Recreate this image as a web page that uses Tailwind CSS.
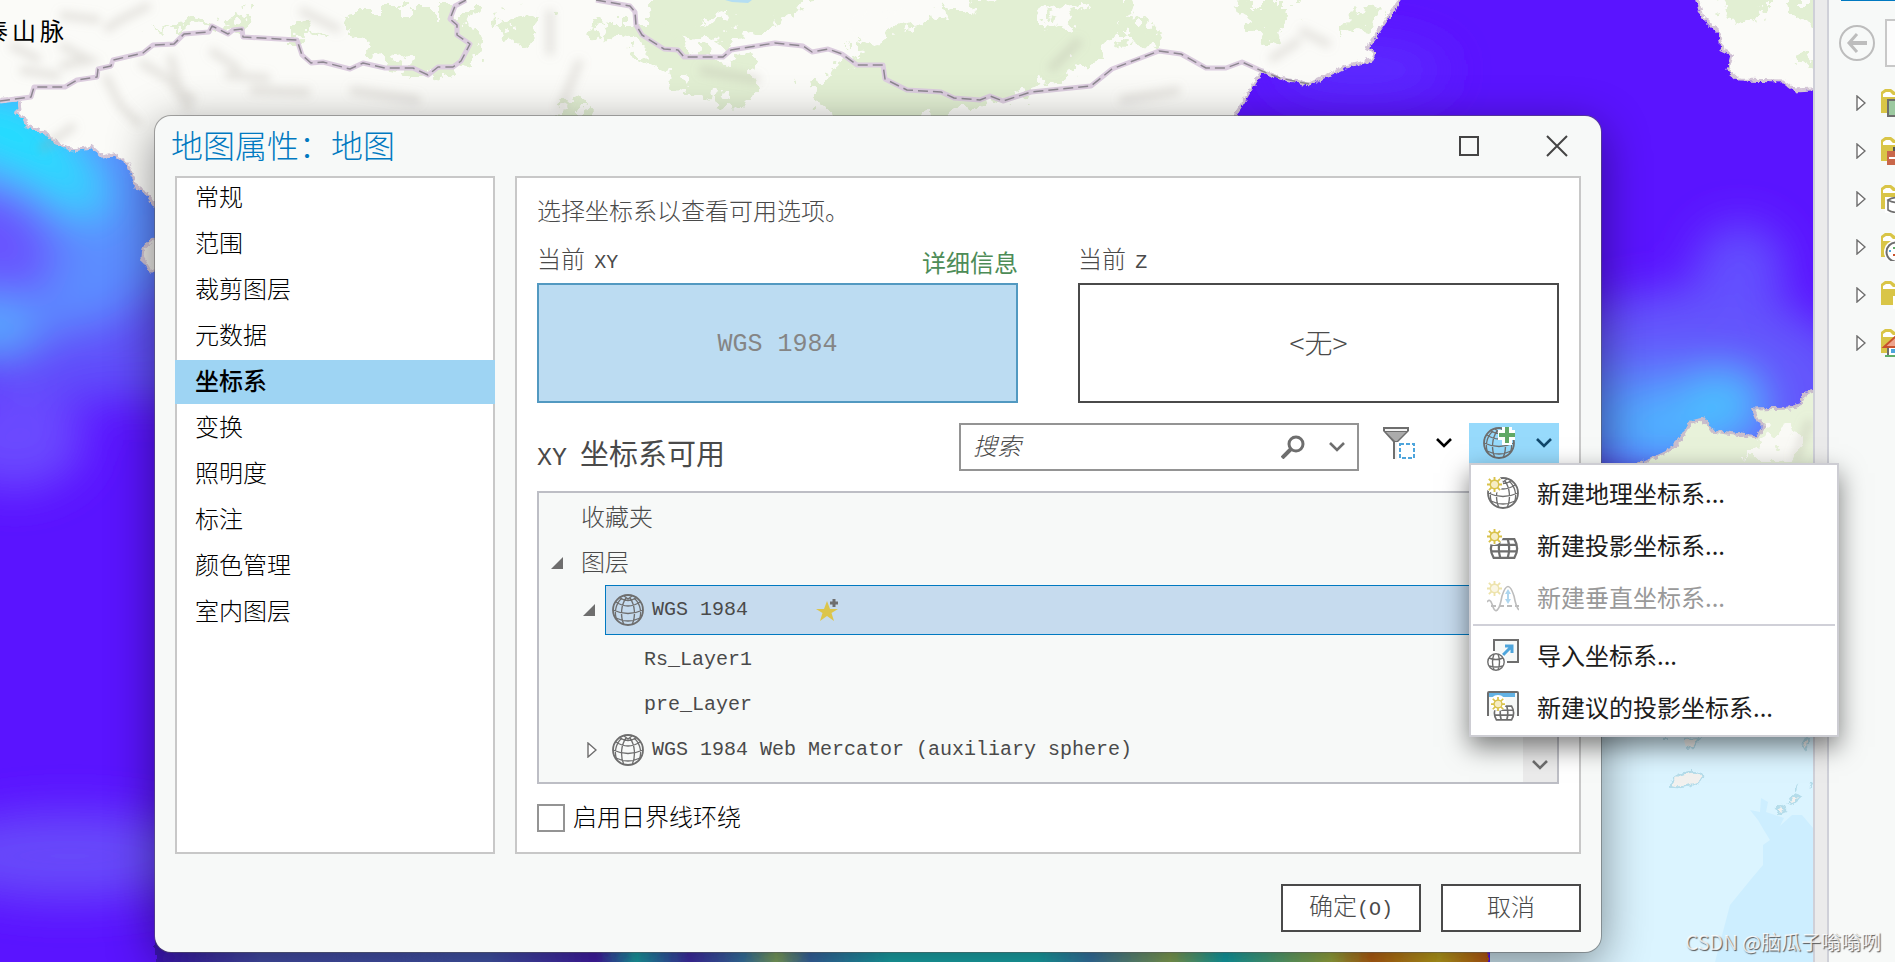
<!DOCTYPE html>
<html lang="zh-CN">
<head>
    <meta charset="UTF-8">
    <meta name="viewport" content="width=device-width, initial-scale=1.0">
    <title>地图属性：地图</title>
    <script src="https://cdn.jsdelivr.net/npm/@tailwindcss/browser@4"></script>
</head>
<body class="relative flex min-h-screen overflow-hidden bg-[#f7f9f8] font-['Noto_Sans_CJK_SC',sans-serif] text-2xl font-light text-[#4a4a4a]">

    <!-- shared icons -->
    <svg class="hidden">
        <symbol id="globe" viewBox="0 0 32 32">
            <g fill="none" stroke="#6e6e6e">
                <circle cx="16" cy="16" r="15" stroke-width="1.8"/>
                <path stroke-width="1.3" d="M14 4C9 11 8 22 12 31M18 4C23 11 24 22 20 31M10 4C3 10 2 20 5 26M22 4C29 10 30 20 27 26M4 8Q16 16 28 8M1 16Q16 23 31 16M4 24Q16 30 28 24M8 4Q16 9 24 4M12 2L16 5L20 2"/>
            </g>
        </symbol>
        <symbol id="sun" viewBox="0 0 16 16">
            <path stroke="#d9c24a" stroke-width="2" d="M8 0V16M0 8H16M2 2L14 14M14 2L2 14"/>
            <circle cx="8" cy="8" r="4.5" fill="#f6edc4" stroke="#d9c24a" stroke-width="1.5"/>
        </symbol>
        <symbol id="barrel" viewBox="0 0 32 24">
            <path fill="#fff" stroke="#6e6e6e" stroke-width="2.4" d="M5 2H27Q33 12 27 22H5Q-1 12 5 2Z"/>
            <path fill="none" stroke="#6e6e6e" stroke-width="2.4" d="M2 8H30M2 15H30M12 2Q9 12 12 22M20 2Q23 12 20 22"/>
        </symbol>
        <symbol id="chevron" viewBox="0 0 16 10">
            <path fill="none" stroke="currentColor" stroke-width="2.6" d="M1 1L8 8L15 1"/>
        </symbol>
        <symbol id="tri-open" viewBox="0 0 10 16">
            <path fill="#fff" stroke="#6e6e6e" stroke-width="1.4" d="M1 1L9 8L1 15Z"/>
        </symbol>
        <symbol id="tri-full" viewBox="0 0 12 12">
            <path fill="#6e6e6e" d="M12 0V12H0Z"/>
        </symbol>
        <symbol id="folder" viewBox="0 0 28 26">
            <path fill="#d9c547" d="M0 24V3L4 0H10L14 3H28V24Z"/>
            <path fill="#fff" d="M2 5L5 3H9L12 6H28V8H2Z"/>
        </symbol>
    </svg>

    <!-- map -->
    <main class="relative min-h-screen flex-1 overflow-hidden bg-[#5a14ff]">
        <svg class="absolute inset-0 h-full w-full" viewBox="0 0 1813 962" preserveAspectRatio="xMinYMin slice">
            <defs>
                <filter id="b8" x="-50%" y="-50%" width="200%" height="200%"><feGaussianBlur stdDeviation="5"/></filter>
                <filter id="b25" x="-50%" y="-50%" width="200%" height="200%"><feGaussianBlur stdDeviation="22"/></filter>
                <filter id="rough" x="-5%" y="-5%" width="110%" height="110%">
                    <feTurbulence type="fractalNoise" baseFrequency="0.06" numOctaves="4" seed="4"/>
                    <feDisplacementMap in="SourceGraphic" xChannelSelector="R" yChannelSelector="G" scale="44"/>
                </filter>
                <filter id="coast" x="-5%" y="-5%" width="110%" height="110%">
                    <feTurbulence type="fractalNoise" baseFrequency="0.2" numOctaves="3" seed="2"/>
                    <feDisplacementMap in="SourceGraphic" xChannelSelector="R" yChannelSelector="G" scale="6"/>
                </filter>
                <linearGradient id="strip">
                    <stop offset="0" stop-color="#3d14b8"/><stop offset=".08" stop-color="#4b55b8"/>
                    <stop offset=".25" stop-color="#4a5cba"/><stop offset=".33" stop-color="#4a20b8"/>
                    <stop offset=".36" stop-color="#1eafb6"/><stop offset=".4" stop-color="#4630b8"/>
                    <stop offset=".44" stop-color="#3c80b4"/><stop offset=".465" stop-color="#8bb46a"/>
                    <stop offset=".49" stop-color="#3c70b4"/><stop offset=".55" stop-color="#1bb5b8"/>
                    <stop offset=".66" stop-color="#1bb5b8"/><stop offset=".7" stop-color="#3b80b4"/>
                    <stop offset=".76" stop-color="#90b25c"/><stop offset=".8" stop-color="#14b0b8"/>
                    <stop offset=".88" stop-color="#a8b844"/><stop offset=".91" stop-color="#c86a14"/>
                    <stop offset=".96" stop-color="#ccb020"/><stop offset="1" stop-color="#c85a10"/>
                </linearGradient>
            </defs>

            <!-- raster, lighter areas -->
            <g filter="url(#b25)">
                <path fill="#6050fa" d="M-60 200H200V400H60L-60 380Z"/>
                <path fill="#5c8dff" d="M-60 60H180V260L110 320L-60 350Z"/>
                <path fill="#6854ff" d="M-60 185L20 190L60 250L40 300L-60 280Z"/>
                <path fill="#22deff" d="M-50 80L40 100L80 150L110 200L90 220L30 185L-50 150Z"/>
                <ellipse cx="0" cy="330" rx="34" ry="18" fill="#55b8ff"/>
                <ellipse cx="15" cy="440" rx="70" ry="50" fill="#6a48ff"/>
                <ellipse cx="70" cy="856" rx="150" ry="44" fill="#6748fa"/>
                <ellipse cx="1360" cy="70" rx="90" ry="30" fill="#5c2cff"/>
                <ellipse cx="1690" cy="390" rx="170" ry="100" fill="#6356fc"/>
                <ellipse cx="1650" cy="420" rx="110" ry="56" fill="#5a84fc"/>
                <ellipse cx="1740" cy="270" rx="46" ry="46" fill="#6450ff"/>
                <ellipse cx="1660" cy="425" rx="50" ry="30" fill="#4fb2ff"/>
                <ellipse cx="1722" cy="402" rx="38" ry="30" fill="#48c4ff"/>
            </g>

            <!-- land north -->
            <g filter="url(#coast)">
                <path fill="#fbfbf8" stroke="#d3c5d6" stroke-width="3" d="M-9 -9V101L19 99L20 110L17 113L26 120L27 126L47 134L56 143L72 150L92 147L103 157L113 154L127 163L134 180L136 187L147 194L153 203L180 240H1000L1226 130L1262 71L1280 78L1309 84L1345 67L1372 60L1375 53L1367 48L1381 28L1406 -9Z"/>
                <path fill="#fbfbf8" stroke="#d3c5d6" stroke-width="3" d="M1695 -9L1703 17L1720 34L1722 50L1732 55L1728 70L1739 80L1783 81L1795 90L1830 88V-9Z"/>
                <path fill="#ecebe8" stroke="#d3c5d6" stroke-width="3" d="M170 225L143 248L142 257L150 271H170Z"/>
                <path fill="#e8f2da" stroke="#c9bdcc" stroke-width="3" d="M1830 388L1805 393L1800 405L1790 408L1753 409L1758 420L1764 426L1757 437L1712 431L1703 419L1691 422L1680 440L1670 450L1645 462L1600 480V760H1830Z"/>
            </g>
            <g fill="#e2efd3" filter="url(#rough)">
                <path d="M352 10H470L480 60L440 75L400 68L350 35L345 20Z"/>
                <path d="M150 28L200 22L250 14L255 22L200 30Z"/>
                <path d="M290 25L320 35L310 42L290 35Z"/>
                <path d="M500 20L545 15L540 35L510 40Z"/>
                <path d="M590 30L640 50L680 90L740 110L760 90L750 60L700 55L660 20L600 20Z"/>
                <path d="M660 -10H830L780 20L730 40L680 42L650 20Z"/>
                <path d="M800 90L850 60L850 40L960 10L1000 -10H1140L1110 50L1090 60L1060 80L1000 100L960 110L900 125H850L825 110Z"/>
                <path d="M1240 0H1300L1290 25L1260 40L1245 20Z"/>
                <path d="M1345 15L1385 10L1370 35L1350 30Z"/>
                <path d="M1120 10L1160 30L1150 45L1120 30Z"/>
                <path d="M1710 -10H1770V10L1740 30L1720 20Z"/>
                <path d="M1790 0H1820V30L1795 20Z"/>
                <path d="M1800 55L1820 50V70L1805 68Z"/>
                <path d="M560 100L590 95L585 118H555Z"/>
            </g>
            <path fill="#fafaf6" filter="url(#rough)" d="M1770 430L1790 425L1800 445L1775 460H1740L1760 440Z"/>
            <g fill="#fbfbf8" filter="url(#rough)">
                <path d="M860 20L930 2L960 8L900 30L850 50Z"/>
                <path d="M1040 20L1080 2L1070 20L1040 30Z"/>
                <path d="M700 20L730 10L725 22Z"/>
            </g>

            <!-- relief -->
            <g fill="none" stroke="#a9a29c" stroke-opacity=".28" stroke-width="8" filter="url(#b8)">
                <path d="M105 30L120 20L150 5M140 62L170 80L190 110M105 75L120 105L140 125M60 45L90 60L60 66M170 55L180 90L195 100M225 75L270 78M250 90L310 92M550 10V55M580 60L560 110M40 150L75 125M300 10L340 30M700 70L760 80M1270 60L1300 40M60 15L100 20M10 45L40 60M1080 40L1050 70M20 70L60 76M210 50L240 70M350 90L420 100M1120 100L1180 90M1300 30L1330 45"/>
                <path d="M1795 460L1810 420"/>
            </g>

            <!-- country border -->
            <g fill="none" stroke-linejoin="round">
                <g stroke="#dccddf" stroke-width="5">
                    <path d="M0 101L31 97L34 87L65 87L77 80L97 77L98 69L111 66L113 60L143 53L153 45L174 44L184 34L209 32L212 26L228 34L233 30L242 29L243 37L297 40L302 55L311 63L323 62L350 69L363 63L385 68L413 68L428 75L438 67L453 67L461 61L470 44L457 35L457 25L450 19L455 6L466 0"/>
                    <path d="M596 0L630 6L635 12L636 25L642 35L664 49L678 50L684 57L723 57L731 50L775 43L803 46L812 52L828 49L842 54L857 65L883 65L885 79L907 90L941 92L954 98L980 100L990 96L1003 101L1031 92L1091 86L1112 69L1159 51L1181 54L1206 68L1226 68L1242 62L1262 71"/>
                </g>
                <g stroke="#8d8790" stroke-width="1.5" stroke-dasharray="10 5">
                    <path d="M0 101L31 97L34 87L65 87L77 80L97 77L98 69L111 66L113 60L143 53L153 45L174 44L184 34L209 32L212 26L228 34L233 30L242 29L243 37L297 40L302 55L311 63L323 62L350 69L363 63L385 68L413 68L428 75L438 67L453 67L461 61L470 44L457 35L457 25L450 19L455 6L466 0"/>
                    <path d="M596 0L630 6L635 12L636 25L642 35L664 49L678 50L684 57L723 57L731 50L775 43L803 46L812 52L828 49L842 54L857 65L883 65L885 79L907 90L941 92L954 98L980 100L990 96L1003 101L1031 92L1091 86L1112 69L1159 51L1181 54L1206 68L1226 68L1242 62L1262 71L1280 78L1309 84"/>
                </g>
            </g>
            <path fill="#b5def2" d="M725 0H752L748 3L732 2Z"/>

            <!-- sea south east -->
            <path fill="#dbf4ff" d="M1490 700H1813V962H1490Z"/>
            <path fill="#cdeeff" d="M1715 962L1730 905L1752 878L1763 865V845L1770 840L1765 832L1758 820L1750 810L1760 812L1761 798L1768 802L1766 812L1784 818L1780 826L1792 815H1802L1813 828V962Z"/>
            <g fill="#f2f1ef" stroke="#b4dcea" stroke-width="2" filter="url(#coast)">
                <path d="M1671 786Q1670 775 1690 772Q1704 771 1702 778Q1700 784 1690 785Q1680 789 1671 786Z"/>
                <path d="M1776 808L1782 805L1786 811L1779 814ZM1788 803L1794 795L1800 797L1792 804ZM1796 792L1798 784M1809 788L1813 782M1664 739H1668M1684 739L1700 738L1694 747L1686 748M1802 745L1806 738L1809 740L1805 749Z"/>
            </g>

            <!-- raster rim south -->
            <path fill="url(#strip)" filter="url(#coast)" d="M155 940H1492L1485 972H155Z"/>
            <path fill="none" stroke="#4b12b8" stroke-width="8" stroke-dasharray="3 14 6 9 2 21" filter="url(#rough)" d="M160 957H700M1000 957H1060"/>
            <path fill="none" stroke="#e0c020" stroke-width="8" stroke-dasharray="5 9 9 14" filter="url(#rough)" d="M1310 957H1480"/>
        </svg>
        <div class="absolute top-2.5 -left-4 flex gap-1 text-2xl leading-10 font-normal text-black">
            <span>泰</span><span>山</span><span>脉</span>
        </div>
    </main>

    <!-- splitter -->
    <div class="w-4 border-x-2 border-[#cfd0d8] bg-[#ebebeb]"></div>

    <!-- catalog pane -->
    <aside class="w-[66px] overflow-hidden pl-3">
        <div class="h-px bg-[#0079c1]"></div>
        <div class="flex w-24 pt-[18px]">
            <button class="-ml-0.5 mt-1.5 h-9" aria-label="返回">
                <svg class="block h-9 w-9" viewBox="0 0 36 36" fill="none" stroke="#bdbdbd">
                    <circle cx="18" cy="18" r="17" stroke-width="2"/>
                    <path stroke-width="4" d="M28 18H11"/><path stroke-width="3" d="M18 9L10 18L18 27"/>
                </svg>
            </button>
            <div class="ml-[10px] h-12 w-10 border-2 border-[#c8c8c8] bg-[#fcfcfc]"></div>
        </div>
        <ul class="w-24 pt-3">
            <li class="flex h-12 items-center gap-[15px] pl-[15px]">
                <svg class="h-4 w-[10px]"><use href="#tri-open"/></svg>
                <svg class="h-7 w-7" viewBox="0 0 28 28"><use href="#folder" width="28" height="26"/><path fill="#9cc9a0" stroke="#6e6e6e" stroke-width="2" d="M7 11H30V27H7Z"/></svg>
            </li>
            <li class="flex h-12 items-center gap-[15px] pl-[15px]">
                <svg class="h-4 w-[10px]"><use href="#tri-open"/></svg>
                <svg class="h-7 w-7" viewBox="0 0 28 28"><use href="#folder" width="28" height="26"/><path fill="#c9674a" d="M6 14H28V28H6Z"/><path stroke="#fff" stroke-width="2" d="M8 21H28"/><path fill="#555" d="M12 10H28V14H12Z"/></svg>
            </li>
            <li class="flex h-12 items-center gap-[15px] pl-[15px]">
                <svg class="h-4 w-[10px]"><use href="#tri-open"/></svg>
                <svg class="h-7 w-7" viewBox="0 0 28 28"><use href="#folder" width="28" height="26"/><path fill="#fff" d="M4 12H28V28H4Z"/><path fill="#fff" stroke="#6e6e6e" stroke-width="1.6" d="M7 15V25Q15 30 27 25V15Q15 10 7 15Q15 20 27 15"/></svg>
            </li>
            <li class="flex h-12 items-center gap-[15px] pl-[15px]">
                <svg class="h-4 w-[10px]"><use href="#tri-open"/></svg>
                <svg class="h-7 w-7" viewBox="0 0 28 28"><use href="#folder" width="28" height="26"/><circle cx="15" cy="19" r="12" fill="#fff"/><circle cx="15" cy="19" r="9.5" fill="#fff" stroke="#6e6e6e" stroke-width="2"/><path fill="#4ea5dc" d="M8 17H10V19H8Z"/><path fill="#5fae69" d="M12 14H14V16H12Z"/><path fill="#c9522d" d="M12 21H14V23H12Z"/></svg>
            </li>
            <li class="flex h-12 items-center gap-[15px] pl-[15px]">
                <svg class="h-4 w-[10px]"><use href="#tri-open"/></svg>
                <svg class="h-7 w-7" viewBox="0 0 28 28"><use href="#folder" width="28" height="26"/><path fill="#fff" d="M12 15H28V28H12Z"/></svg>
            </li>
            <li class="flex h-12 items-center gap-[15px] pl-[15px]">
                <svg class="h-4 w-[10px]"><use href="#tri-open"/></svg>
                <svg class="h-7 w-7" viewBox="0 0 28 28"><use href="#folder" width="28" height="26"/><path fill="#fff" stroke="#6e6e6e" stroke-width="2" d="M7 17H24V28H7Z"/><path fill="#eda58e" stroke="#c9522d" stroke-width="2" d="M3 18L14 8L26 18Z"/><path fill="#4ea5dc" d="M10 20H18V24H10Z"/><path fill="#5fae69" d="M4 26H28V28H4Z"/></svg>
            </li>
        </ul>
    </aside>

    <!-- map properties window -->
    <section class="absolute top-[116px] right-[294px] left-[155px] rounded-2xl bg-[#f7f9f8] px-5 pb-5 shadow-[0_0_0_1px_rgba(90,90,90,0.5),0_12px_48px_rgba(0,0,0,0.45)]">
        <header class="flex h-15 items-center justify-between pr-3">
            <h1 class="-ml-1 pb-1 text-[32px] leading-10 text-[#0079c1]">地图属性：地图</h1>
            <div class="flex gap-16">
                <button class="flex h-6 w-6 items-center justify-center" aria-label="最大化"><span class="h-5 w-5 border-2 border-[#444]"></span></button>
                <button class="flex h-6 w-6 items-center justify-center" aria-label="关闭">
                    <svg class="h-6 w-6" viewBox="0 0 24 24"><path stroke="#444" stroke-width="2" d="M2 2L22 22M22 2L2 22"/></svg>
                </button>
            </div>
        </header>

        <div class="flex gap-5">
            <!-- pages -->
            <nav class="w-80 shrink-0 bg-white text-black inset-ring-2 inset-ring-[#c8c8c8]">
                <ul class="flex flex-col gap-0.5 leading-10">
                    <li><a href="#" class="block pb-1 pl-5">常规</a></li>
                    <li><a href="#" class="block pb-1 pl-5">范围</a></li>
                    <li><a href="#" class="block pb-1 pl-5">裁剪图层</a></li>
                    <li><a href="#" class="block pb-1 pl-5">元数据</a></li>
                    <li><a href="#" class="block bg-[#9ed4f3] pb-1 pl-5 font-medium">坐标系</a></li>
                    <li><a href="#" class="block pb-1 pl-5">变换</a></li>
                    <li><a href="#" class="block pb-1 pl-5">照明度</a></li>
                    <li><a href="#" class="block pb-1 pl-5">标注</a></li>
                    <li><a href="#" class="block pb-1 pl-5">颜色管理</a></li>
                    <li><a href="#" class="block pb-1 pl-5">室内图层</a></li>
                </ul>
            </nav>

            <!-- coordinate systems -->
            <div class="flex-1 border-2 border-[#c8c8c8] bg-white pt-4 pr-5 pb-5 pl-5">
                <p class="leading-8">选择坐标系以查看可用选项。</p>
                <div class="mt-4 grid grid-cols-2 gap-[60px]">
                    <div>
                        <div class="flex h-[41px] justify-between">
                            <span class="leading-8">当前 <span class="ml-1 font-['Liberation_Mono',monospace] text-xl">XY</span></span>
                            <a href="#" class="leading-10 font-normal text-[#4d8c57]">详细信息</a>
                        </div>
                        <button class="block h-30 w-full border-2 border-[#5299c1] bg-[#bcdcf2] pt-1 font-['Liberation_Mono',monospace] text-[25px] text-[#858585]">WGS 1984</button>
                    </div>
                    <div>
                        <div class="h-[41px] leading-8">当前 <span class="ml-1 font-['Liberation_Mono',monospace] text-xl">Z</span></div>
                        <button class="block h-30 w-full border-2 border-[#4a4a4a] bg-white text-[28px]">&lt;无&gt;</button>
                    </div>
                </div>

                <div class="mt-5 flex h-12">
                    <h2 class="self-end text-[29px] leading-6 font-normal"><span class="font-['Liberation_Mono',monospace] text-[25px]">XY</span>&nbsp; 坐标系可用</h2>
                    <div class="ml-auto flex w-100 items-center border-2 border-[#949494] pr-3 pl-3">
                        <input type="text" aria-label="搜索" placeholder="搜索" class="min-w-0 flex-1 pb-1 italic outline-none placeholder:text-[#4a4a4a]">
                        <svg class="h-6 w-6" viewBox="0 0 24 24" fill="none" stroke="#6e6e6e"><circle cx="15" cy="9" r="7" stroke-width="3"/><path stroke-width="4" d="M10 14L1 23"/></svg>
                        <svg class="ml-6 h-[10px] w-4 text-[#6e6e6e]"><use href="#chevron"/></svg>
                    </div>
                    <button class="ml-6 flex h-10 w-[69px] items-center justify-between" aria-label="过滤器">
                        <svg class="h-8 w-8" viewBox="0 0 32 32">
                            <path fill="#6e6e6e" d="M0 0H26V4L15 15V32H10V15L0 4Z"/>
                            <path fill="#f4f4f4" d="M2 2H24V4H2ZM12 15H14V32H12Z"/>
                            <path fill="#ababab" d="M3 5H23L14 14H12Z"/>
                            <path fill="#fff" d="M14 15H32V32H14Z"/>
                            <path fill="none" stroke="#4ea5dc" stroke-width="2" stroke-dasharray="4 2" d="M17 17H31V31H17Z"/>
                        </svg>
                        <svg class="h-[10px] w-4 text-black"><use href="#chevron"/></svg>
                    </button>

                    <div class="relative z-10 ml-[17px]">
                        <button class="flex h-10 w-[90px] items-center justify-between bg-[#97dafc] pr-[7px] pl-[14px]" aria-label="添加坐标系">
                            <svg class="h-8 w-8" viewBox="0 0 32 32">
                                <use href="#globe"/>
                                <path fill="#fff" d="M19 -1H29V3H33V13H29V18H19V13H15V3H19Z"/>
                                <path fill="#61a866" d="M22 0H26V6H32V10H26V16H22V10H16V6H22Z"/>
                            </svg>
                            <svg class="h-[10px] w-4 text-[#11476b]"><use href="#chevron"/></svg>
                        </button>
                        <ul class="absolute top-10 left-0 w-[370px] border-2 border-[#cdcdd3] bg-white py-0.5 leading-[52px] font-normal text-[#1c1c1c] shadow-[0_10px_24px_rgba(0,0,0,0.5)]">
                            <li><button class="flex w-full items-center gap-[18px] pl-4">
                                <svg class="h-8 w-8" viewBox="0 0 32 32"><use href="#globe"/><circle cx="7" cy="7" r="9" fill="#fff"/><use href="#sun" width="15" height="15"/></svg>
                                新建地理坐标系...</button></li>
                            <li><button class="flex w-full items-center gap-[18px] pl-4">
                                <svg class="h-8 w-8" viewBox="0 0 32 32"><use href="#barrel" x="2" y="8" width="30" height="23"/><circle cx="7" cy="7" r="9" fill="#fff"/><use href="#sun" width="15" height="15"/></svg>
                                新建投影坐标系...</button></li>
                            <li><button disabled class="flex w-full items-center gap-[18px] pl-4 text-[#999]">
                                <svg class="h-8 w-8 opacity-45" viewBox="0 0 32 32">
                                    <use href="#sun" width="15" height="15"/>
                                    <path fill="none" stroke="#6e6e6e" stroke-width="1.6" d="M0 21Q3 17 5 23Q8 33 11 28Q13 26 15 15Q21 -4 27 15Q29 26 32 29"/>
                                    <path stroke="#6e6e6e" stroke-width="2" stroke-dasharray="5 3" d="M4 25H32"/>
                                    <path fill="#4ea5dc" d="M21 8L24 13H22V18H24L21 23L18 18H20V13H18Z"/>
                                </svg>
                                新建垂直坐标系...</button></li>
                            <li class="mx-0.5 mt-px mb-[3px] h-0.5 bg-[#d0d0d8]"></li>
                            <li><button class="flex w-full items-center gap-[18px] pl-4">
                                <svg class="h-8 w-8" viewBox="0 0 32 32">
                                    <path fill="#f7f9f8" stroke="#6e6e6e" stroke-width="2" d="M7 12V1H31V23H20"/>
                                    <path fill="none" stroke="#4ea5dc" stroke-width="3" d="M16 16L25 7M18 7H25V14"/>
                                    <circle cx="9" cy="23" r="10" fill="#fff"/>
                                    <g fill="none" stroke="#6e6e6e" stroke-width="1.4"><circle cx="9" cy="23" r="8.2"/><path d="M7 15Q4 23 7 31M11 15Q14 23 11 31M2 19Q9 22 16 19M2 27Q9 29 16 27"/></g>
                                </svg>
                                导入坐标系...</button></li>
                            <li><button class="flex w-full items-center gap-[18px] pl-4">
                                <svg class="h-8 w-8" viewBox="0 0 32 32">
                                    <path fill="#f7f9f8" stroke="#6e6e6e" stroke-width="2" d="M1 25V2Q1 1 2 1H30Q31 1 31 2V25"/>
                                    <path fill="#62b2e4" d="M2 2H28V6H2Z"/>
                                    <use href="#barrel" x="6" y="12" width="22" height="20"/>
                                    <circle cx="11" cy="12" r="8" fill="#fff"/><use href="#sun" x="4" y="6" width="14" height="14"/>
                                </svg>
                                新建议的投影坐标系...</button></li>
                        </ul>
                    </div>
                </div>

                <div class="mt-5 flex border-2 border-[#bdbec5] bg-[#f7f9f8]">
                    <ul class="flex-1 pt-0.5 pb-2.5 leading-[45px]">
                        <li class="pb-[3px] pl-[42px] leading-[42px]">收藏夹</li>
                        <li class="flex items-center gap-[18px] pl-3"><svg class="h-3 w-3"><use href="#tri-full"/></svg><span class="pb-[3px] leading-[42px]">图层</span></li>
                        <li class="mb-0.5 flex items-center gap-[10px] pl-11">
                            <svg class="h-3 w-3"><use href="#tri-full"/></svg>
                            <div class="flex h-[50px] flex-1 items-center border border-[#0079c1] bg-[#c6dbee] pl-1.5">
                                <svg class="h-8 w-8"><use href="#globe"/></svg>
                                <span class="ml-2 font-['Liberation_Mono',monospace] text-xl">WGS 1984</span>
                                <svg class="ml-[68px] h-6 w-6" viewBox="0 0 24 24">
                                    <path fill="#dcc54b" d="M11 3L14 11H22L15.500 15L18 23L11 18L4 23L6.500 15L0 11H8Z"/>
                                    <path stroke="#6e6e6e" stroke-width="3" d="M18 1V9M14 5H22"/>
                                </svg>
                            </div>
                        </li>
                        <li class="pl-[105px] font-['Liberation_Mono',monospace] text-xl leading-[45px]">Rs_Layer1</li>
                        <li class="pl-[105px] font-['Liberation_Mono',monospace] text-xl leading-[45px]">pre_Layer</li>
                        <li class="flex items-center pl-12">
                            <svg class="mr-[15px] h-4 w-[10px]"><use href="#tri-open"/></svg>
                            <svg class="h-8 w-8"><use href="#globe"/></svg>
                            <span class="ml-2 font-['Liberation_Mono',monospace] text-xl leading-[45px]">WGS 1984 Web Mercator (auxiliary sphere)</span>
                        </li>
                    </ul>
                    <div class="flex w-[34px] items-end justify-center bg-[#ebebeb] pb-3">
                        <svg class="h-[10px] w-4 text-[#6e6e6e]"><use href="#chevron"/></svg>
                    </div>
                </div>

                <label class="mt-5 flex h-7 items-center gap-2 leading-6 text-black">
                    <input type="checkbox" class="h-7 w-7 appearance-none border-2 border-[#949494] bg-white">
                    <span class="pb-1">启用日界线环绕</span>
                </label>
            </div>
        </div>

        <footer class="mt-[30px] flex justify-end gap-5">
            <button class="h-12 w-35 border-2 border-[#4a4a4a] bg-white pb-1">确定<span class="font-['Liberation_Mono',monospace] text-xl">(O)</span></button>
            <button class="h-12 w-35 border-2 border-[#4a4a4a] bg-white pb-1">取消</button>
        </footer>
    </section>

    <div class="absolute right-[14px] bottom-1 text-xl leading-8 font-normal text-white/80 [text-shadow:1px_1px_1px_#555]">CSDN @脑瓜子嗡嗡咧</div>
</body>
</html>
